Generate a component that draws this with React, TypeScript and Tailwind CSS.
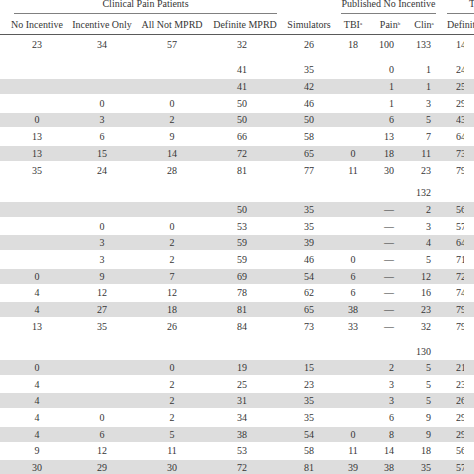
import React from 'react';

type Cell = string | number;

// widths of the data columns, left to right (last column is clipped at the edge)
const cols = [
    'w-[74px] justify-center',
    'w-[56px] justify-center',
    'w-[84px] justify-center',
    'w-[56px] justify-center',
    'w-[78px] justify-center',
    'w-[10px] justify-center',
    'w-[36px] justify-end',
    'w-[37px] justify-end',
];

const firstRow: Cell[] = [23, 34, 57, 32, 26, 18, 100, 133, 14];

const section1: Cell[][] = [
    ['', '', '', 41, 35, '', 0, 1, 24],
    ['', '', '', 41, 42, '', 1, 1, 25],
    ['', 0, 0, 50, 46, '', 1, 3, 29],
    [0, 3, 2, 50, 50, '', 6, 5, 43],
    [13, 6, 9, 66, 58, '', 13, 7, 64],
    [13, 15, 14, 72, 65, 0, 18, 11, 73],
    [35, 24, 28, 81, 77, 11, 30, 23, 79],
];

const section2: Cell[][] = [
    ['', '', '', 50, 35, '', '—', 2, 56],
    ['', 0, 0, 53, 35, '', '—', 3, 57],
    ['', 3, 2, 59, 39, '', '—', 4, 64],
    ['', 3, 2, 59, 46, 0, '—', 5, 71],
    [0, 9, 7, 69, 54, 6, '—', 12, 72],
    [4, 12, 12, 78, 62, 6, '—', 16, 74],
    [4, 27, 18, 81, 65, 38, '—', 23, 79],
    [13, 35, 26, 84, 73, 33, '—', 32, 79],
];

const section3: Cell[][] = [
    [0, '', 0, 19, 15, '', 2, 5, 21],
    [4, '', 2, 25, 23, '', 3, 5, 23],
    [4, '', 2, 31, 35, '', 3, 5, 26],
    [4, 0, 2, 34, 35, '', 6, 9, 29],
    [4, 6, 5, 38, 54, 0, 8, 9, 29],
    [9, 12, 11, 53, 58, 11, 14, 18, 56],
    [30, 29, 30, 72, 81, 39, 38, 35, 57],
];

function Row({ cells, gray }: { cells: Cell[]; gray?: boolean }) {
    return (
        <div className={`flex h-[16.7px] items-center py-[1px] ${gray ? 'bg-[#dddddd] bg-clip-content' : ''}`}>
            {cols.map((c, i) => (
                <div key={i} className={`flex shrink-0 whitespace-nowrap ${c}`}>{cells[i]}</div>
            ))}
            <div className="shrink-0 pl-[25px]">
                <span className="block w-[8px] overflow-hidden whitespace-nowrap">{cells[8]}</span>
            </div>
        </div>
    );
}

function NRow({ value, height }: { value: number; height: string }) {
    return (
        <div className={`flex items-center ${height}`}>
            <div className="w-[416px] shrink-0" />
            <div>{value}</div>
        </div>
    );
}

export default function App() {
    return (
        <div className="h-[474px] w-[474px] overflow-hidden bg-white font-['Liberation_Serif',serif] text-[10px] text-[#363636]">
            {/* group headers */}
            <div className="flex h-[14px]">
                <div className="w-[14px] shrink-0" />
                <div className="flex w-[263px] shrink-0 justify-center border-b border-[#808080] leading-[8px]">
                    Clinical Pain Patients
                </div>
                <div className="w-[64px] shrink-0" />
                <div className="flex w-[95px] shrink-0 justify-center whitespace-nowrap border-b border-[#808080] leading-[8px]">
                    Published No Incentive
                </div>
                <div className="w-[11px] shrink-0" />
                <div className="w-[60px] shrink-0 whitespace-nowrap border-b border-[#808080] pl-[22px] leading-[8px]">
                    Total
                </div>
            </div>

            {/* column headers */}
            <div className="flex h-[21px] items-center border-b border-[#5a5a5a] whitespace-nowrap">
                <div className="flex w-[74px] shrink-0 justify-center">No Incentive</div>
                <div className="flex w-[56px] shrink-0 justify-center">Incentive Only</div>
                <div className="flex w-[84px] shrink-0 justify-center">All Not MPRD</div>
                <div className="flex w-[56px] shrink-0 justify-center pl-[6px]">Definite MPRD</div>
                <div className="flex w-[78px] shrink-0 justify-center">Simulators</div>
                <div className="flex w-[10px] shrink-0 justify-center">
                    <span>TBI<sup className="text-[5px]">a</sup></span>
                </div>
                <div className="flex w-[64px] shrink-0 justify-center">
                    <span>Pain<sup className="text-[5px]">b</sup></span>
                </div>
                <div className="flex w-[4px] shrink-0 justify-center">
                    <span>Clin<sup className="text-[5px]">a</sup></span>
                </div>
                <div className="shrink-0 pl-[21px]">Definite MPRD</div>
            </div>

            <div className="h-[1.6px]" />
            <Row cells={firstRow} />
            <div className="h-[8.3px]" />
            {section1.map((r, i) => (
                <Row key={i} cells={r} gray={i % 2 === 1} />
            ))}
            <div className="h-[6px]" />
            <NRow value={132} height="h-[16.7px]" />
            {section2.map((r, i) => (
                <Row key={i} cells={r} gray={i % 2 === 0} />
            ))}
            <div className="h-[8.5px]" />
            <NRow value={130} height="h-[16px]" />
            {section3.map((r, i) => (
                <Row key={i} cells={r} gray={i % 2 === 0} />
            ))}
        </div>
    );
}
